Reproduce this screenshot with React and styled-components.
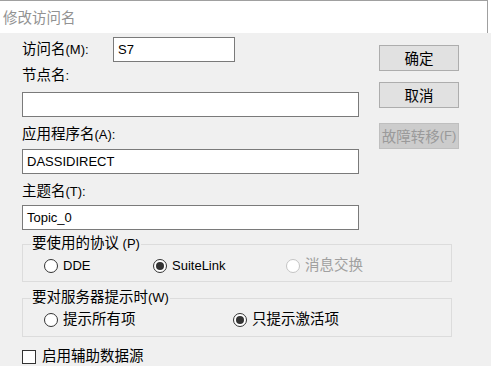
import React from 'react';
import styled, { createGlobalStyle } from 'styled-components';

const GlobalStyle = createGlobalStyle`
  * {
    box-sizing: border-box;
  }
  html,
  body {
    margin: 0;
    padding: 0;
    background: #ffffff;
  }
  body {
    font-family: 'Liberation Sans', 'Noto Sans CJK SC', sans-serif;
    font-size: 13px;
    color: #000000;
  }
`;

const Window = styled.div`
  width: 491px;
  height: 366px;
  display: flex;
  flex-direction: column;
  overflow: hidden;
`;

const TitleBar = styled.div`
  width: 488px;
  height: 33px;
  flex: 0 0 auto;
  background: #ffffff;
  border-top: 1px solid #a0a0a0;
  border-right: 1px solid #a0a0a0;
  display: flex;
  align-items: center;
  padding: 1px 0 0 3px;
  color: #929292;
  line-height: 20px;
`;

const Body = styled.div`
  flex: 1 1 auto;
  background: #f0f0f0;
  padding: 4px 0 0 22px;
  line-height: 20px;
`;

const TopSection = styled.div`
  display: flex;
  gap: 20px;
`;

const FormColumn = styled.div`
  width: 337px;
  display: flex;
  flex-direction: column;
`;

const InlineRow = styled.div`
  display: flex;
  align-items: center;
`;

const Label = styled.div`
  width: ${(p) => (p.$width ? `${p.$width}px` : 'auto')};
  height: ${(p) => 20 + (p.$pt || 0) + (p.$pb || 0)}px;
  padding: ${(p) => p.$pt || 0}px 0 ${(p) => p.$pb || 0}px;
  line-height: 20px;
  white-space: nowrap;
`;

const TextBox = styled.div`
  width: ${(p) => (p.$width ? `${p.$width}px` : '100%')};
  height: 25px;
  flex: 0 0 auto;
  background: #ffffff;
  border: 1px solid #7a7a7a;
  padding: 0 4px;
  display: flex;
  align-items: center;
  font-size: 13px;
`;

const ButtonColumn = styled.div`
  width: 80px;
  padding-top: 8px;
  display: flex;
  flex-direction: column;
`;

const Button = styled.div`
  height: 26px;
  margin-top: ${(p) => p.$mt || 0}px;
  background: ${(p) => (p.$disabled ? '#cccccc' : '#e1e1e1')};
  border: 1px solid ${(p) => (p.$disabled ? '#bfbfbf' : '#adadad')};
  color: ${(p) => (p.$disabled ? '#9a9a9a' : '#000000')};
  display: flex;
  align-items: center;
  justify-content: center;
  white-space: nowrap;
`;

const Group = styled.fieldset`
  width: 430px;
  margin: ${(p) => p.$mt}px 0 0 0;
  padding: 0 0 ${(p) => p.$pb}px 0;
  border: 1px solid #dcdcdc;
  min-inline-size: 0;
`;

const Legend = styled.legend`
  margin-left: 8px;
  padding: 0 1px;
  height: 18px;
  line-height: 18px;
  white-space: nowrap;
`;

const RadioRow = styled.div`
  display: flex;
  margin-top: 5px;
  padding-left: 21px;
  height: 16px;
  align-items: center;
`;

const RadioItem = styled.div`
  width: ${(p) => p.$width}px;
  display: flex;
  align-items: center;
  gap: 5px;
  color: ${(p) => (p.$disabled ? '#a0a0a0' : '#000000')};
  white-space: nowrap;
`;

const RadioCircle = styled.span`
  width: 14px;
  height: 14px;
  flex: 0 0 auto;
  border-radius: 50%;
  background: #ffffff;
  border: 1px solid ${(p) => (p.$disabled ? '#c4c4c4' : '#333333')};
  display: flex;
  align-items: center;
  justify-content: center;

  &::after {
    content: '';
    width: 8px;
    height: 8px;
    border-radius: 50%;
    background: #333333;
    display: ${(p) => (p.$checked ? 'block' : 'none')};
  }
`;

const CheckRow = styled.div`
  margin-top: 13px;
  height: 14px;
  display: flex;
  align-items: center;
  gap: 6px;
  white-space: nowrap;
`;

const CheckBox = styled.span`
  width: 14px;
  height: 14px;
  flex: 0 0 auto;
  background: #ffffff;
  border: 1px solid #333333;
`;

const Han = styled.span`
  font-family: 'Noto Sans CJK SC', sans-serif;
  font-size: 14.5px;
  line-height: 1;
`;

// CJK runs get the wider Chinese face, latin stays in Liberation Sans
function Txt({ children }) {
  return children
    .split(/([\u3400-\u9fff]+)/)
    .filter(Boolean)
    .map((s, i) =>
      /[\u3400-\u9fff]/.test(s) ? (
        <Han key={i}>{s}</Han>
      ) : (
        <React.Fragment key={i}>{s}</React.Fragment>
      )
    );
}

function Radio({ label, width, checked, disabled }) {
  return (
    <RadioItem $width={width} $disabled={disabled}>
      <RadioCircle $checked={checked} $disabled={disabled} />
      <span>
        <Txt>{label}</Txt>
      </span>
    </RadioItem>
  );
}

export default function App() {
  return (
    <Window>
      <GlobalStyle />
      <TitleBar>
        <Txt>修改访问名</Txt>
      </TitleBar>
      <Body>
        <TopSection>
          <FormColumn>
            <InlineRow>
              <Label $width={91}>
                <Txt>访问名(M):</Txt>
              </Label>
              <TextBox $width={122}>S7</TextBox>
            </InlineRow>
            <Label $pt={4} $pb={6}>
              <Txt>节点名:</Txt>
            </Label>
            <TextBox />
            <Label $pt={8} $pb={4}>
              <Txt>应用程序名(A):</Txt>
            </Label>
            <TextBox>DASSIDIRECT</TextBox>
            <Label $pt={8} $pb={3}>
              <Txt>主题名(T):</Txt>
            </Label>
            <TextBox>Topic_0</TextBox>
          </FormColumn>
          <ButtonColumn>
            <Button>
              <Txt>确定</Txt>
            </Button>
            <Button $mt={11}>
              <Txt>取消</Txt>
            </Button>
            <Button $mt={15} $disabled>
              <Txt>故障转移(F)</Txt>
            </Button>
          </ButtonColumn>
        </TopSection>

        <Group $mt={5} $pb={7}>
          <Legend>
            <Txt>要使用的协议 (P)</Txt>
          </Legend>
          <RadioRow>
            <Radio label="DDE" width={109} />
            <Radio label="SuiteLink" width={133} checked />
            <Radio label="消息交换" width={120} disabled />
          </RadioRow>
        </Group>

        <Group $mt={7} $pb={8}>
          <Legend>
            <Txt>要对服务器提示时(W)</Txt>
          </Legend>
          <RadioRow>
            <Radio label="提示所有项" width={189} />
            <Radio label="只提示激活项" width={160} checked />
          </RadioRow>
        </Group>

        <CheckRow>
          <CheckBox />
          <span>
            <Txt>启用辅助数据源</Txt>
          </span>
        </CheckRow>
      </Body>
    </Window>
  );
}
